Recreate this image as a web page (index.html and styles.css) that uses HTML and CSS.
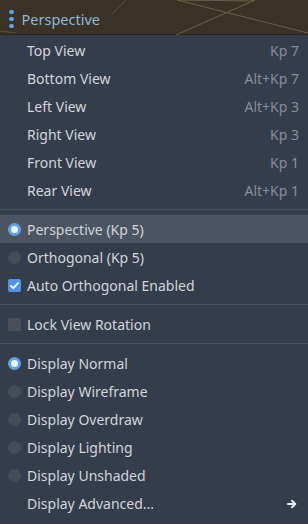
FILE: index.html
```html
<!DOCTYPE html>
<html lang="en">
<head>
    <meta charset="UTF-8">
    <meta name="viewport" content="width=device-width, initial-scale=1.0">
    <title>Perspective menu</title>
    <link rel="stylesheet" href="styles.css">
</head>
<body>

    <!-- Viewport toolbar -->
    <div class="toolbar">
        <svg class="grid" width="308" height="35" viewBox="0 0 308 35">
            <line x1="177" y1="0" x2="308" y2="33" stroke="#6e5f4b" stroke-width="1"/>
            <line x1="255" y1="0" x2="176" y2="35" stroke="#6e5f4b" stroke-width="1"/>
            <line x1="177" y1="0" x2="254" y2="1" stroke="#6e5f4b" stroke-width="1"/>
            <line x1="126" y1="0" x2="112" y2="14" stroke="#5a4e3e" stroke-width="1"/>
            <line x1="0" y1="31" x2="16" y2="33" stroke="#5a4e3e" stroke-width="1"/>
        </svg>
        <div class="view-button">
            <span class="dots"><i></i><i></i><i></i></span>
            <span>Perspective</span>
        </div>
    </div>

    <!-- Popup menu -->
    <div class="menu">
        <div class="item"><span class="icon"></span><span class="label">Top View</span><span class="shortcut">Kp 7</span></div>
        <div class="item"><span class="icon"></span><span class="label">Bottom View</span><span class="shortcut">Alt+Kp 7</span></div>
        <div class="item"><span class="icon"></span><span class="label">Left View</span><span class="shortcut">Alt+Kp 3</span></div>
        <div class="item"><span class="icon"></span><span class="label">Right View</span><span class="shortcut">Kp 3</span></div>
        <div class="item"><span class="icon"></span><span class="label">Front View</span><span class="shortcut">Kp 1</span></div>
        <div class="item"><span class="icon"></span><span class="label">Rear View</span><span class="shortcut">Alt+Kp 1</span></div>

        <div class="separator"></div>

        <div class="item hover"><span class="icon"><span class="radio on"></span></span><span class="label">Perspective (Kp 5)</span></div>
        <div class="item"><span class="icon"><span class="radio"></span></span><span class="label">Orthogonal (Kp 5)</span></div>
        <div class="item">
            <span class="icon">
                <span class="check on">
                    <svg width="13" height="13" viewBox="0 0 13 13"><path d="M3 6.8 L5.4 9.2 L10 4" fill="none" stroke="#ffffff" stroke-width="1.8" stroke-linecap="round" stroke-linejoin="round"/></svg>
                </span>
            </span>
            <span class="label">Auto Orthogonal Enabled</span>
        </div>

        <div class="separator"></div>

        <div class="item"><span class="icon"><span class="check"></span></span><span class="label">Lock View Rotation</span></div>

        <div class="separator"></div>

        <div class="item"><span class="icon"><span class="radio on"></span></span><span class="label">Display Normal</span></div>
        <div class="item"><span class="icon"><span class="radio"></span></span><span class="label">Display Wireframe</span></div>
        <div class="item"><span class="icon"><span class="radio"></span></span><span class="label">Display Overdraw</span></div>
        <div class="item"><span class="icon"><span class="radio"></span></span><span class="label">Display Lighting</span></div>
        <div class="item"><span class="icon"><span class="radio"></span></span><span class="label">Display Unshaded</span></div>
        <div class="item">
            <span class="icon"></span><span class="label">Display Advanced...</span>
            <span class="shortcut">
                <svg class="arrow" width="12" height="12" viewBox="0 0 12 12"><path d="M2 6 H9 M6 2.8 L9.3 6 L6 9.2" fill="none" stroke="#e6e8ec" stroke-width="2" stroke-linecap="round" stroke-linejoin="round"/></svg>
            </span>
        </div>
    </div>

</body>
</html>
```

FILE: styles.css
```css
body {
    margin: 0;
    padding: 0;
    width: 308px;
    height: 524px;
    overflow: hidden;
    background: #363d4a;
    font-family: "Noto Sans", "Open Sans", sans-serif;
    font-size: 14px;
    color: #d2d5da;
}

/* Toolbar above the menu */
.toolbar {
    position: relative;
    height: 35px;
    background: #3b3227;
    border-bottom: 1px solid #2a2620;
    box-sizing: border-box;
    display: flex;
    align-items: center;
}

.grid {
    position: absolute;
    top: 0;
    left: 0;
}

.view-button {
    position: relative;
    display: flex;
    align-items: center;
    gap: 8px;
    padding-left: 9px;
    color: #8db5de;
    font-size: 14.5px;
    margin-top: 4px;
}

.dots {
    display: flex;
    flex-direction: column;
    gap: 2.5px;
}

.dots i {
    display: block;
    width: 4.5px;
    height: 4.5px;
    border-radius: 50%;
    background: #58a6ee;
}

/* Menu */
.menu {
    display: flex;
    flex-direction: column;
    padding-top: 1px;
}

.item {
    height: 28px;
    display: flex;
    align-items: center;
    padding: 0 9px 0 8px;
}

.item.hover {
    background: #4d5461;
}

.icon {
    width: 19px;
    display: flex;
    align-items: center;
}

.label {
    flex: 1;
    white-space: nowrap;
    padding-top: 1px;
}

.shortcut {
    color: #868d98;
    display: flex;
    align-items: center;
    padding-top: 1px;
}

.arrow {
    margin-right: 1px;
}

.separator {
    height: 1px;
    background: #4b525e;
    margin: 5px 0;
}

.radio {
    display: block;
    width: 13px;
    height: 13px;
    border-radius: 50%;
    background: #464c57;
    box-sizing: border-box;
}

.radio.on {
    background: #eaf3fd;
    border: 3px solid #5aa2ef;
}

.check {
    display: block;
    width: 13px;
    height: 13px;
    border-radius: 2px;
    background: #4a4f59;
}

.check.on {
    background: #4d94e8;
}

.check svg {
    display: block;
}
```
